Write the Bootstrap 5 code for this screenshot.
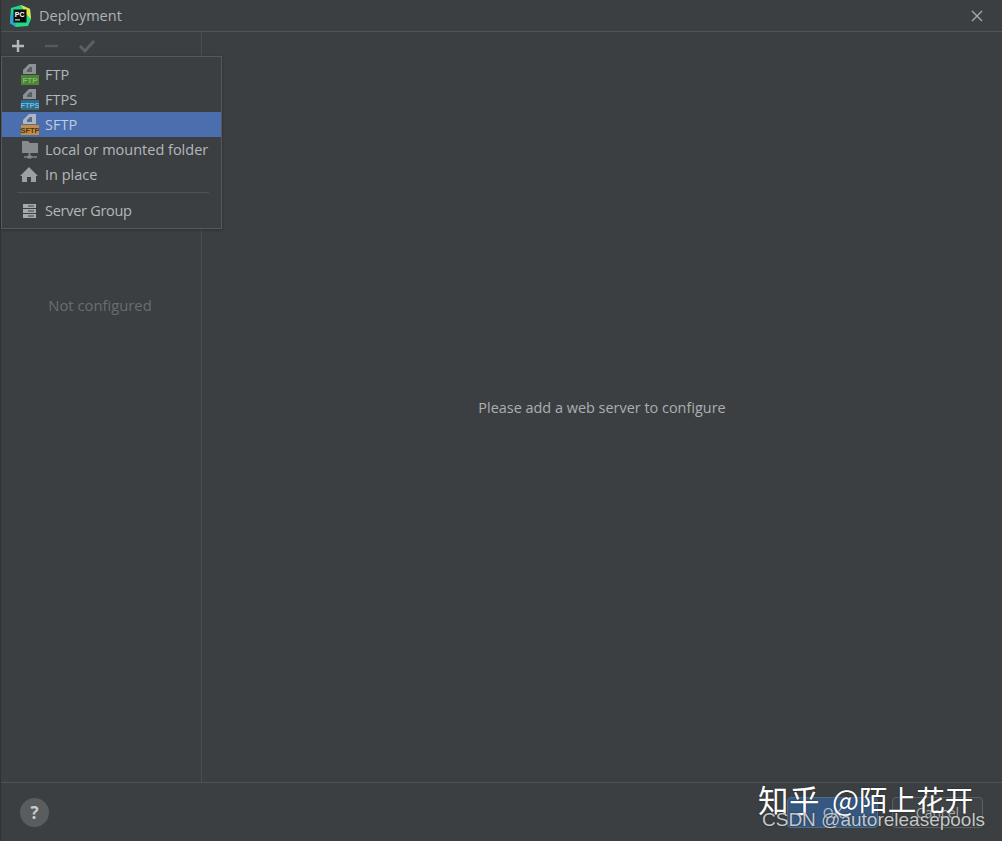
<!DOCTYPE html>
<html lang="en">
<head>
<meta charset="utf-8">
<title>Deployment</title>
<link href="https://cdn.jsdelivr.net/npm/bootstrap@5.3.0/dist/css/bootstrap.min.css" rel="stylesheet">
<style>
html,body{height:841px;overflow:hidden;background:#3c3f41;}
body{font-family:"Open Sans","Liberation Sans",sans-serif;font-size:14px;color:#b4b8bb;}
.dlg{height:841px;width:1002px;border-left:1px solid #2f3234;position:relative;}
.titlebar{height:32px;border-bottom:1px solid #515456;padding-left:7px;padding-right:19px;}
.titlebar .ttl{font-size:14.5px;color:#aeb2b5;margin-left:7px;}
.mainrow{height:750px;}
.leftcol{width:201px;border-right:1px solid #4a4d4f;position:relative;}
.toolrow{height:28px;padding-left:10px;gap:19px;}
.notconf{color:#696d70;font-size:14.8px;text-align:center;margin-top:234px;padding-right:2px;}
.rightmsg{color:#abafb2;font-size:14.45px;margin-top:2px;}
.popmenu{position:absolute;left:0;top:24px;width:221px;height:173px;background:#3c3f41;border:1px solid #55585a;z-index:5;padding-top:5px;box-shadow:0 1px 3px rgba(0,0,0,.25);}
.mitem{height:25px;padding-left:17px;color:#b4b8bb;font-size:14.5px;gap:6px;white-space:nowrap;}
.mitem.on{background:#4b6eaf;color:#bfcbe0;}
.mitem.tight span{letter-spacing:-.28px;}
.mitem svg{flex:none;}
.msep{border-top:1px solid #505355;margin:5px 12px 5px 15px;}
.foot{height:59px;border-top:1px solid #505355;padding:0 19px;position:relative;}
.helpbtn{width:29px;height:29px;border-radius:50%;background:#595d5f;color:#c9cbcc;font-weight:700;font-size:17px;line-height:29px;text-align:center;padding:0;border:0;margin-top:1px;}
.dbtn{position:absolute;top:14px;width:91px;height:31px;border-radius:4px;font-size:14px;line-height:29px;text-align:center;}
.dbtn.okb{left:786px;background:#365880;border:1px solid #4c708c;color:#b9c6d4;}
.dbtn.cnb{left:891px;background:#3f4345;border:1px solid #5e6060;color:#a8acaf;}
.wm1{position:absolute;left:757px;top:778px;font-family:"Noto Sans CJK SC","Liberation Sans",sans-serif;line-height:42px;color:#fff;white-space:nowrap;z-index:9;text-shadow:0 0 2px rgba(0,0,0,.45);display:flex;align-items:center;gap:12px;}
.wm1 .zh{font-size:30.5px;letter-spacing:.5px;}
.wm1 .nm{font-size:28.6px;}
.wm2{position:absolute;left:761px;top:808px;font-family:"Liberation Sans",sans-serif;font-size:19px;line-height:24px;color:#c5c7c8;white-space:nowrap;z-index:10;text-shadow:0 0 2px rgba(0,0,0,.5);}
</style>
</head>
<body>
<div class="dlg d-flex flex-column">
  <div class="titlebar d-flex align-items-center">
    <svg width="24" height="24" viewBox="0 0 24 24">
      <path d="M3 4 L13 1 L22 5 L23 15 L20 22 L8 23 L2 19 Z" fill="#21d789"/>
      <path d="M13 1 L22 5 L23 15 L18 10 Z" fill="#e6e24a"/>
      <path d="M2 19 L3 8 L7 14 L8 23 Z" fill="#2aa7d0"/>
      <rect x="5.5" y="5.5" width="13" height="13" fill="#0d0d0d"/>
      <text x="6.8" y="12.6" font-size="7" font-weight="700" fill="#fff" font-family="Liberation Sans">PC</text>
      <rect x="7" y="15.4" width="5" height="1" fill="#fff"/>
    </svg>
    <span class="ttl">Deployment</span>
    <svg class="ms-auto" width="12" height="12" viewBox="0 0 12 12"><path d="M1 1 L11 11 M11 1 L1 11" stroke="#a8abad" stroke-width="1.4"/></svg>
  </div>
  <div class="mainrow d-flex">
    <div class="leftcol flex-shrink-0 d-flex flex-column">
      <div class="toolrow d-flex align-items-center">
        <svg width="14" height="14" viewBox="0 0 14 14"><path d="M7 1 V13 M1 7 H13" stroke="#b4b8bb" stroke-width="2.4"/></svg>
        <svg width="15" height="14" viewBox="0 0 15 14"><path d="M1 7 H14" stroke="#565a5c" stroke-width="2.4"/></svg>
        <svg width="18" height="14" viewBox="0 0 18 14"><path d="M2 7 L7 12 L16 2" fill="none" stroke="#5e6264" stroke-width="2.8"/></svg>
      </div>
      <div class="popmenu">
        <div class="mitem d-flex align-items-center">
          <svg width="20" height="21" viewBox="0 0 20 21"><path d="M4 10 L4 6 L10 0 H17 V10 Z" fill="#8d9296"/><path d="M8 8 V6 L11 3 H13 V8 Z" fill="#5b5f62"/><rect x="2" y="11" width="18" height="10" fill="#4c8534"/><text x="11" y="19" font-size="8" font-weight="700" text-anchor="middle" fill="#86b56a" font-family="Liberation Sans">FTP</text></svg>
          <span>FTP</span>
        </div>
        <div class="mitem d-flex align-items-center">
          <svg width="20" height="21" viewBox="0 0 20 21"><path d="M4 10 L4 6 L10 0 H17 V10 Z" fill="#8d9296"/><path d="M8 8 V6 L11 3 H13 V8 Z" fill="#5b5f62"/><rect x="2" y="11" width="18" height="10" fill="#2a6d90"/><text x="11" y="19" font-size="7.5" font-weight="700" text-anchor="middle" fill="#79b8d8" font-family="Liberation Sans">FTPS</text></svg>
          <span>FTPS</span>
        </div>
        <div class="mitem on d-flex align-items-center">
          <svg width="20" height="21" viewBox="0 0 20 21"><path d="M4 10 L4 6 L10 0 H17 V10 Z" fill="#b0b6bf"/><path d="M8 8 V6 L11 3 H13 V8 Z" fill="#566a8c"/><rect x="2" y="11" width="18" height="10" fill="#c58c45"/><text x="11" y="19" font-size="7.5" font-weight="700" text-anchor="middle" fill="#4f3415" font-family="Liberation Sans">SFTP</text></svg>
          <span>SFTP</span>
        </div>
        <div class="mitem d-flex align-items-center">
          <svg width="20" height="20" viewBox="0 0 20 20"><path d="M3 1 H9 L11 3 H19 V13 H3 Z" fill="#868b8e"/><path d="M10.5 13 V16" stroke="#868b8e" stroke-width="1.6"/><path d="M5 17 H18" stroke="#868b8e" stroke-width="1.4"/><rect x="8.5" y="15.5" width="4" height="3" fill="#868b8e"/></svg>
          <span>Local or mounted folder</span>
        </div>
        <div class="mitem d-flex align-items-center">
          <svg width="20" height="20" viewBox="0 0 20 20"><path d="M10 2 L19 11 H17 V17 H12 V12 H8 V17 H3 V11 H1 Z" fill="#9da1a4"/></svg>
          <span>In place</span>
        </div>
        <div class="msep"></div>
        <div class="mitem tight d-flex align-items-center">
          <svg width="20" height="20" viewBox="0 0 20 20"><path d="M4 3 H17 V7 H4 Z M4 8 H17 V12 H4 Z M4 13 H17 V17 H4 Z" fill="#a6aaac"/><path d="M9 5 H15 M9 10 H15 M9 15 H15" stroke="#3c3f41" stroke-width="1"/></svg>
          <span>Server Group</span>
        </div>
      </div>
      <div class="notconf">Not configured</div>
    </div>
    <div class="flex-grow-1 d-flex align-items-center justify-content-center">
      <span class="rightmsg">Please add a web server to configure</span>
    </div>
  </div>
  <div class="foot d-flex align-items-center">
    <button class="helpbtn" type="button">?</button>
    <div class="dbtn okb">OK</div>
    <div class="dbtn cnb">Cancel</div>
  </div>
  <div class="wm1"><span class="zh">知乎</span><span class="nm">@陌上花开</span></div>
  <div class="wm2">CSDN @autoreleasepools</div>
</div>
<script src="https://cdn.jsdelivr.net/npm/bootstrap@5.3.0/dist/js/bootstrap.bundle.min.js"></script>
</body>
</html>
